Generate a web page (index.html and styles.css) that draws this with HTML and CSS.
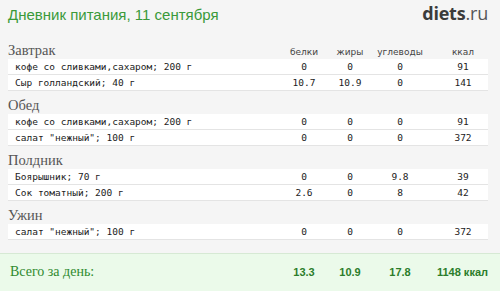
FILE: index.html
```html
<!DOCTYPE html>
<html lang="ru">
<head>
<meta charset="utf-8">
<title>Дневник питания</title>
<link rel="stylesheet" href="styles.css">
</head>
<body>
<div class="page">
  <header class="top">
    <h1 class="title">Дневник питания, 11 сентября</h1>
    <div class="logo"><span class="logo-main">diets</span><span class="logo-tld">.ru</span></div>
  </header>

  <section class="meal">
    <div class="meal-head grid">
      <h2 class="meal-name">Завтрак</h2>
      <span class="col">белки</span><span class="col">жиры</span><span class="col">углеводы</span><span class="col kcal">ккал</span>
    </div>
    <div class="row grid"><span class="name">кофе со сливками,сахаром; 200 г</span><span class="num">0</span><span class="num">0</span><span class="num">0</span><span class="num kcal">91</span></div>
    <div class="row grid"><span class="name">Сыр голландский; 40 г</span><span class="num">10.7</span><span class="num">10.9</span><span class="num">0</span><span class="num kcal">141</span></div>
  </section>

  <section class="meal">
    <div class="meal-head grid"><h2 class="meal-name">Обед</h2></div>
    <div class="row grid"><span class="name">кофе со сливками,сахаром; 200 г</span><span class="num">0</span><span class="num">0</span><span class="num">0</span><span class="num kcal">91</span></div>
    <div class="row grid"><span class="name">салат "нежный"; 100 г</span><span class="num">0</span><span class="num">0</span><span class="num">0</span><span class="num kcal">372</span></div>
  </section>

  <section class="meal">
    <div class="meal-head grid"><h2 class="meal-name">Полдник</h2></div>
    <div class="row grid"><span class="name">Боярышник; 70 г</span><span class="num">0</span><span class="num">0</span><span class="num">9.8</span><span class="num kcal">39</span></div>
    <div class="row grid"><span class="name">Сок томатный; 200 г</span><span class="num">2.6</span><span class="num">0</span><span class="num">8</span><span class="num kcal">42</span></div>
  </section>

  <section class="meal">
    <div class="meal-head grid"><h2 class="meal-name">Ужин</h2></div>
    <div class="row grid"><span class="name">салат "нежный"; 100 г</span><span class="num">0</span><span class="num">0</span><span class="num">0</span><span class="num kcal">372</span></div>
  </section>
</div>

<footer class="total">
  <div class="grid total-grid">
    <span class="total-label">Всего за день:</span>
    <span class="tnum">13.3</span><span class="tnum">10.9</span><span class="tnum">17.8</span><span class="tnum tkcal">1148 ккал</span>
  </div>
</footer>
</body>
</html>
```

FILE: styles.css
```css
html, body {
  margin: 0;
  padding: 0;
  background: #f5f5f5;
  height: 100%;
}
body {
  width: 500px;
  height: 291px;
  overflow: hidden;
  display: flex;
  flex-direction: column;
  font-family: "DejaVu Sans", sans-serif;
}
.page {
  padding: 0 12px 0 8px;
}
.top {
  height: 36px;
  display: flex;
  justify-content: space-between;
  align-items: flex-start;
}
.title {
  margin: 6px 0 0 0;
  font-family: "Liberation Sans", Arial, sans-serif;
  font-weight: normal;
  font-size: 15px;
  line-height: 18px;
  color: #3a9a3a;
}
.logo {
  margin-top: 2px;
  font-family: "Open Sans", sans-serif;
  font-size: 18px;
  line-height: 22px;
  letter-spacing: -0.2px;
}
.logo-main {
  font-weight: 700;
  color: #3b3b3b;
}
.logo-tld {
  font-weight: 400;
  color: #555;
}
.grid {
  display: grid;
  grid-template-columns: 272px 48px 44px 56px 60px;
}
.meal {
  display: flex;
  flex-direction: column;
}
.meal-head {
  height: 17px;
  padding-top: 6px;
  align-items: baseline;
}
.meal-name {
  margin: 0;
  font-family: "Liberation Serif", "Times New Roman", serif;
  font-weight: normal;
  font-size: 14.5px;
  line-height: 17px;
  color: #555;
}
.col {
  font-family: "DejaVu Sans", sans-serif;
  font-size: 9px;
  color: #444;
  text-align: center;
}
.row {
  height: 15px;
  background: #fff;
  border-bottom: 1px solid #e4e4e4;
  font-family: "DejaVu Sans Mono", monospace;
  font-size: 9.5px;
  line-height: 15px;
  color: #222;
}
.name {
  padding-left: 7px;
  white-space: nowrap;
}
.num {
  text-align: center;
}
.kcal {
  padding-left: 10px;
}
.total {
  margin-top: 13px;
  flex: 1;
  background: #ebfaea;
  border-top: 1px solid #d6e9d4;
}
.total-grid {
  padding: 0 12px 0 8px;
  height: 36px;
  align-items: center;
}
.total-label {
  padding-left: 2px;
  font-family: "Liberation Serif", "Times New Roman", serif;
  font-size: 14px;
  color: #2f8a2f;
}
.tnum {
  font-family: "Liberation Sans", Arial, sans-serif;
  font-weight: bold;
  font-size: 11px;
  color: #2b7d2b;
  text-align: center;
}
.tkcal {
  text-align: right;
}
```
